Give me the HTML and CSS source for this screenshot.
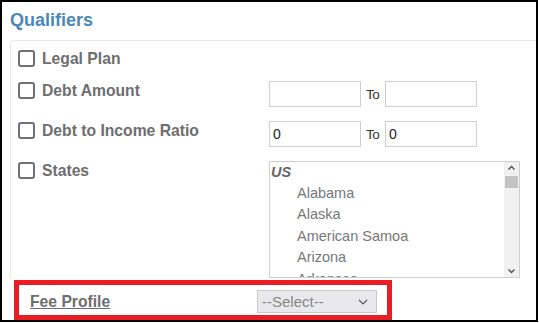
FILE: index.html
```html
<!DOCTYPE html>
<html lang="en">
<head>
  <meta charset="UTF-8">
  <title>Qualifiers</title>
  <link rel="stylesheet" href="styles.css">
</head>
<body>
  <div class="frame">
    <h2 class="title">Qualifiers</h2>
    <div class="panel">
      <div class="row">
        <div class="label-col"><span class="check"></span><span class="label">Legal Plan</span></div>
      </div>
      <div class="row">
        <div class="label-col"><span class="check"></span><span class="label">Debt Amount</span></div>
        <div class="range">
          <input class="num" type="text" value="">
          <span class="to">To</span>
          <input class="num" type="text" value="">
        </div>
      </div>
      <div class="row">
        <div class="label-col"><span class="check"></span><span class="label">Debt to Income Ratio</span></div>
        <div class="range">
          <input class="num" type="text" value="0">
          <span class="to">To</span>
          <input class="num" type="text" value="0">
        </div>
      </div>
      <div class="row">
        <div class="label-col"><span class="check"></span><span class="label">States</span></div>
        <div class="state-list">
          <div class="options">
            <div class="group">US</div>
            <div class="opt">Alabama</div>
            <div class="opt">Alaska</div>
            <div class="opt">American Samoa</div>
            <div class="opt">Arizona</div>
            <div class="opt">Arkansas</div>
          </div>
          <div class="scrollbar">
            <svg class="arrow" width="15" height="12" viewBox="0 0 15 12"><path d="M4.5 7.5 L7.5 4.5 L10.5 7.5" fill="none" stroke="#505050" stroke-width="1.4"/></svg>
            <div class="thumb"></div>
            <div class="track"></div>
            <svg class="arrow" width="15" height="12" viewBox="0 0 15 12"><path d="M4.5 4.5 L7.5 7.5 L10.5 4.5" fill="none" stroke="#505050" stroke-width="1.4"/></svg>
          </div>
        </div>
      </div>
    </div>
    <div class="fee-box">
      <span class="fee-label">Fee Profile</span>
      <div class="select">
        <span>--Select--</span>
        <svg width="10" height="6" viewBox="0 0 10 6"><path d="M1 1 L5 5 L9 1" fill="none" stroke="#555" stroke-width="1.2"/></svg>
      </div>
    </div>
  </div>
</body>
</html>
```

FILE: styles.css
```css
body {
  margin: 0;
  font-family: 'Liberation Sans', Arial, sans-serif;
  background: white;
}
.frame {
  width: 538px;
  height: 322px;
  box-sizing: border-box;
  border: 2px solid #000;
  overflow: hidden;
  background: white;
}
.title {
  margin: 0;
  padding: 7px 8px 0;
  font-size: 18px;
  line-height: 22px;
  font-weight: bold;
  color: #4b88b8;
}
.panel {
  margin: 9px 0 0 8px;
  width: 600px;
  height: 239px;
  box-sizing: border-box;
  border: 1px solid #e8e8e8;
  border-bottom: none;
  border-radius: 4px 4px 0 0;
  padding: 8px 0 0 7px;
  display: flex;
  flex-direction: column;
  gap: 14px;
}
.row {
  display: flex;
  align-items: flex-start;
}
.label-col {
  width: 251px;
  display: flex;
  align-items: center;
  gap: 7px;
  margin-top: 1px;
}
.check {
  width: 17px;
  height: 17px;
  box-sizing: border-box;
  border: 2px solid #6f6f78;
  border-radius: 3px;
  flex-shrink: 0;
}
.label {
  font-size: 15.7px;
  line-height: 17px;
  font-weight: bold;
  color: #6e6e6e;
}
.range {
  display: flex;
  align-items: center;
}
.num {
  width: 92px;
  height: 26px;
  box-sizing: border-box;
  border: 1px solid #cfcfcf;
  padding: 0 3px;
  font-family: inherit;
  font-size: 14px;
  color: #222;
  margin: 0;
}
.to {
  width: 24px;
  box-sizing: border-box;
  padding-left: 5px;
  font-size: 13.5px;
  color: #333;
  letter-spacing: -0.5px;
}
.state-list {
  width: 251px;
  height: 117px;
  box-sizing: border-box;
  border: 1px solid #cfcfcf;
  display: flex;
}
.options {
  flex: 1;
  overflow: hidden;
  font-size: 14.5px;
  line-height: 21.5px;
  color: #777;
}
.group {
  padding-left: 1px;
  margin-bottom: -1px;
  font-weight: bold;
  font-style: italic;
  color: #666;
}
.opt {
  padding-left: 27px;
  white-space: nowrap;
}
.scrollbar {
  width: 15px;
  background: #f1f1f1;
  display: flex;
  flex-direction: column;
}
.arrow {
  display: block;
  flex-shrink: 0;
}
.thumb {
  height: 12px;
  margin: 2px 1px 0;
  background: #c4c4c4;
}
.track {
  flex: 1;
}
.fee-box {
  margin: 1px 0 0 12px;
  width: 378px;
  height: 40px;
  box-sizing: border-box;
  border: 5px solid #ea1d25;
  padding: 5px 0 0 11px;
  display: flex;
  align-items: flex-start;
}
.fee-label {
  width: 227px;
  font-size: 15.7px;
  line-height: 23px;
  font-weight: bold;
  color: #6e6e6e;
  text-decoration: underline;
}
.select {
  width: 120px;
  height: 23px;
  box-sizing: border-box;
  border: 1px solid #c8c8c8;
  background: #e9e9ed;
  display: flex;
  align-items: center;
  justify-content: space-between;
  padding: 0 8px 0 4px;
  font-size: 15px;
  color: #888;
}
```
